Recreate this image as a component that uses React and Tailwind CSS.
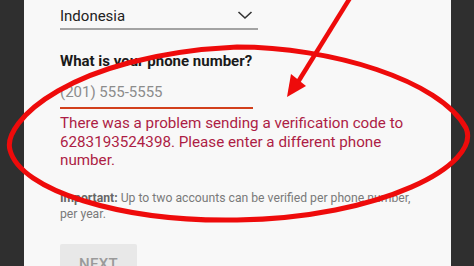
import React from "react";

export default function App() {
  return (
    <div className="relative flex h-[266px] w-[474px] overflow-hidden bg-[#2f2f2f]" style={{ fontFamily: "Roboto, 'Liberation Sans', sans-serif" }}>
      <div className="w-[24px] shrink-0 bg-[#2f2f2f]" />
      <div className="flex-1 bg-[#f8f8f8] pl-[36px] pt-[4px]">
        <div className="flex h-[26px] w-[198px] items-center justify-between border-b-2 border-[#a3a3a3]">
          <span className="text-[15px] leading-[20px] text-[#222]">Indonesia</span>
          <svg width="16" height="10" viewBox="0 0 16 10" className="mr-[5px] mb-[2px]">
            <path d="M1.5 2 L8 8 L14.5 2" fill="none" stroke="#333" strokeWidth="1.6" />
          </svg>
        </div>
        <div className="mt-[21px] text-[15px] font-bold leading-[20px] text-[#1a1a1a]">What is your phone number?</div>
        <div className="mt-[11px] w-[193px] border-b-2 border-[#d2401c] pb-[5px] text-[15px] leading-[20px] text-[#8c8c8c]">(201) 555-5555</div>
        <div className="mt-[5px] w-[350px] text-[15.2px] leading-[18.5px] text-[#ad1d45]">
          There was a problem sending a verification code to 6283193524398. Please enter a different phone number.
        </div>
        <div className="mt-[20px] w-[362px] text-[12.2px] leading-[16px] text-[#7a7a7a]">
          <span className="font-bold text-[#666]">Important:</span> Up to two accounts can be verified per phone number, per year.
        </div>
        <div className="mt-[22px] flex h-[36px] w-[77px] items-start justify-center rounded-[2px] bg-[#e8e8e8] pt-[10px] text-[15px] font-medium leading-[20px] tracking-wide text-[#9a9a9a]">
          NEXT
        </div>
      </div>
      <div className="w-[23px] shrink-0 bg-[#2f2f2f]" />
      <svg className="pointer-events-none absolute left-0 top-0" width="474" height="266" viewBox="0 0 474 266">
        <path
          d="M237 47 C330 47 440 80 466 128 C482 165 380 218 237 220 C120 222 20 190 10 150 C2 122 70 55 237 47 Z"
          fill="none"
          stroke="#ee0b0b"
          strokeWidth="5"
        />
        <line x1="350" y1="-2" x2="298" y2="82" stroke="#ee0b0b" strokeWidth="4.5" />
        <polygon points="287,97 291,74 306,86" fill="#ee0b0b" />
      </svg>
    </div>
  );
}
